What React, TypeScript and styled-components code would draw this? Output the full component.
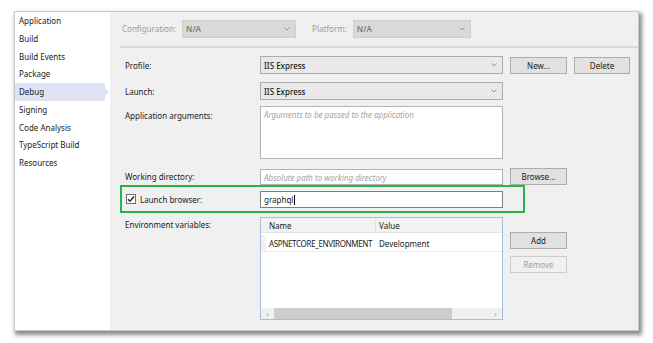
import styled, { createGlobalStyle } from 'styled-components'

const Global = createGlobalStyle`
  html, body {
    margin: 0;
    padding: 0;
    background: #ffffff;
  }
  body {
    font-family: 'Noto Sans', 'Open Sans', sans-serif;
    font-size: 8px;
    color: #1a1a1a;
  }
`

const Page = styled.div`
  width: 653px;
  height: 343px;
  padding: 12px 0 0 15px;
  box-sizing: border-box;
`

const Window = styled.div`
  width: 623px;
  height: 318px;
  display: flex;
  background: #f0f0f0;
  box-shadow: 0 0 0 1px #c8c8c8, 2px 3px 4px 2px rgba(0, 0, 0, 0.45);
`

// Side navigation
const Nav = styled.ul`
  width: 95px;
  margin: 0;
  padding: 0;
  list-style: none;
  background: #ffffff;
`

const NavItem = styled.li<{ $active?: boolean }>`
  position: relative;
  height: 17.75px;
  line-height: 17.75px;
  padding-left: 4px;
  margin-right: 5px;
  background: ${({ $active }) => ($active ? '#dfe3f4' : 'transparent')};

  &::after {
    content: '';
    display: ${({ $active }) => ($active ? 'block' : 'none')};
    position: absolute;
    right: -4px;
    top: 5px;
    border-left: 4px solid #dfe3f4;
    border-top: 4px solid transparent;
    border-bottom: 4px solid transparent;
  }
`

// Main pane
const Main = styled.div`
  flex: 1;
  display: flex;
  flex-direction: column;
  padding-left: 10px;
`

const ConfigBar = styled.div`
  display: flex;
  align-items: center;
  gap: 6px;
  height: 19px;
  margin-top: 7px;
  padding-left: 2px;
  padding-bottom: 8px;
  border-bottom: 2px solid #d8d8d8;
`

const MutedLabel = styled.span<{ $gapBefore?: number }>`
  color: #9d9d9d;
  margin-left: ${({ $gapBefore }) => $gapBefore || 0}px;
`

const Select = styled.div<{ $disabled?: boolean; $w?: number }>`
  display: flex;
  align-items: center;
  justify-content: space-between;
  box-sizing: border-box;
  width: ${({ $w }) => ($w ? `${$w}px` : '100%')};
  height: 18px;
  padding: 0 5px 0 3px;
  border: 1px solid ${({ $disabled }) => ($disabled ? '#cfcfcf' : '#acacac')};
  background: ${({ $disabled }) => ($disabled ? '#d9d9d9' : '#e9e9e9')};
  color: ${({ $disabled }) => ($disabled ? '#7a7a7a' : '#1a1a1a')};
  font-weight: ${({ $disabled }) => ($disabled ? 600 : 500)};
`

const Chevron = () => (
  <svg width="6" height="4" viewBox="0 0 6 4">
    <path d="M0.5 0.5 L3 3 L5.5 0.5" fill="none" stroke="#8a8a8a" strokeWidth="0.9" />
  </svg>
)

const Form = styled.div`
  display: flex;
  flex-direction: column;
  padding-left: 5px;
  margin-top: 8px;
`

const Row = styled.div<{ $top?: number; $align?: string }>`
  display: grid;
  grid-template-columns: 128px 243px 57px 56px;
  column-gap: 7px;
  align-items: ${({ $align }) => $align || 'center'};
  margin-top: ${({ $top }) => $top || 0}px;
`

const Label = styled.span<{ $pad?: number }>`
  padding-top: ${({ $pad }) => $pad || 0}px;
`

const TextBox = styled.div<{ $h?: number; $placeholder?: boolean; $focused?: boolean }>`
  box-sizing: border-box;
  height: ${({ $h }) => $h || 17}px;
  padding: 1px 3px;
  background: #ffffff;
  border: 1px solid ${({ $focused }) => ($focused ? '#7f7f7f' : '#b4b4b4')};
  color: ${({ $placeholder }) => ($placeholder ? '#a3a3a3' : '#1a1a1a')};
  font-style: ${({ $placeholder }) => ($placeholder ? 'italic' : 'normal')};
  line-height: 13px;
  white-space: nowrap;
  overflow: hidden;
`

const Button = styled.button<{ $disabled?: boolean }>`
  box-sizing: border-box;
  height: 17px;
  padding: 0;
  font: inherit;
  background: ${({ $disabled }) => ($disabled ? '#f0f0f0' : '#e1e1e1')};
  border: 1px solid ${({ $disabled }) => ($disabled ? '#cccccc' : '#adadad')};
  color: ${({ $disabled }) => ($disabled ? '#a2a2a2' : '#1a1a1a')};
`

const Highlight = styled.div`
  display: grid;
  grid-template-columns: 127px 243px;
  column-gap: 7px;
  align-items: center;
  box-sizing: border-box;
  width: 405px;
  height: 28px;
  margin: 0 0 0 -5px;
  padding: 0 0 0 4px;
  border: 2px solid #2db14d;
`

const CheckLabel = styled.label`
  display: flex;
  align-items: center;
  gap: 4px;
`

const CheckBox = styled.span`
  display: inline-flex;
  align-items: center;
  justify-content: center;
  width: 10px;
  height: 10px;
  box-sizing: border-box;
  border: 1px solid #707070;
  background: #ffffff;
`

const Caret = styled.span`
  display: inline-block;
  width: 1px;
  height: 10px;
  margin-left: 1px;
  background: #000;
  vertical-align: -2px;
`

// Environment variables grid
const Table = styled.div`
  display: flex;
  flex-direction: column;
  box-sizing: border-box;
  height: 103px;
  background: #ffffff;
  border: 1px solid #a9bdd6;
`

const TRow = styled.div<{ $head?: boolean }>`
  display: grid;
  grid-template-columns: 5px 110px 1fr;
  height: ${({ $head }) => ($head ? 14 : 16)}px;
  margin-bottom: ${({ $head }) => ($head ? 2 : 0)}px;
  background: ${({ $head }) => ($head ? '#f2f2f2' : '#ffffff')};
  border-bottom: 1px solid ${({ $head }) => ($head ? '#e4e4e4' : '#ededed')};
`

const Cell = styled.div<{ $gutter?: boolean; $divider?: boolean; $tight?: boolean }>`
  display: flex;
  align-items: center;
  padding-left: ${({ $gutter }) => ($gutter ? 0 : 3)}px;
  background: ${({ $gutter }) => ($gutter ? '#f2f2f2' : 'transparent')};
  border-right: 1px solid ${({ $divider }) => ($divider ? '#e0e0e0' : 'transparent')};
  letter-spacing: ${({ $tight }) => ($tight ? '-0.35px' : 'normal')};
  white-space: nowrap;
  overflow: hidden;
`

const TBody = styled.div`
  flex: 1;
`

const ScrollBar = styled.div`
  display: grid;
  grid-template-columns: 13px 178px 1fr 13px;
  height: 11px;
  background: #f0f0f0;
  color: #a0a0a0;
  font-size: 8px;
  line-height: 11px;
  text-align: center;
`

const Thumb = styled.div`
  background: #cdcdcd;
`

const SideButtons = styled.div`
  display: flex;
  flex-direction: column;
  gap: 7px;
  margin-top: 15px;
`

const navItems = [
  'Application',
  'Build',
  'Build Events',
  'Package',
  'Debug',
  'Signing',
  'Code Analysis',
  'TypeScript Build',
  'Resources',
]

export default function App() {
  return (
    <>
      <Global />
      <Page>
        <Window>
          <Nav>
            {navItems.map((item) => (
              <NavItem key={item} $active={item === 'Debug'}>
                {item}
              </NavItem>
            ))}
          </Nav>
          <Main>
            <ConfigBar>
              <MutedLabel>Configuration:</MutedLabel>
              <Select $disabled $w={114}>
                N/A
                <Chevron />
              </Select>
              <MutedLabel $gapBefore={10}>Platform:</MutedLabel>
              <Select $disabled $w={118}>
                N/A
                <Chevron />
              </Select>
            </ConfigBar>

            <Form>
              <Row>
                <Label>Profile:</Label>
                <Select>
                  IIS Express
                  <Chevron />
                </Select>
                <Button>New...</Button>
                <Button>Delete</Button>
              </Row>
              <Row $top={8}>
                <Label>Launch:</Label>
                <Select>
                  IIS Express
                  <Chevron />
                </Select>
              </Row>
              <Row $top={6} $align="start">
                <Label $pad={4}>Application arguments:</Label>
                <TextBox $h={53} $placeholder>
                  Arguments to be passed to the application
                </TextBox>
              </Row>
              <Row $top={9}>
                <Label>Working directory:</Label>
                <TextBox $h={16} $placeholder>
                  Absolute path to working directory
                </TextBox>
                <Button>Browse...</Button>
              </Row>
              <Highlight>
                <CheckLabel>
                  <CheckBox>
                    <svg width="8" height="8" viewBox="0 0 8 8">
                      <path d="M1 4.2 L3 6.2 L7 1.5" fill="none" stroke="#222" strokeWidth="1.3" />
                    </svg>
                  </CheckBox>
                  Launch browser:
                </CheckLabel>
                <TextBox $h={17} $focused>
                  graphql
                  <Caret />
                </TextBox>
              </Highlight>
              <Row $top={4} $align="start">
                <Label $pad={2}>Environment variables:</Label>
                <Table>
                  <TRow $head>
                    <Cell $gutter />
                    <Cell $divider>Name</Cell>
                    <Cell>Value</Cell>
                  </TRow>
                  <TRow>
                    <Cell $gutter />
                    <Cell $tight>ASPNETCORE_ENVIRONMENT</Cell>
                    <Cell>Development</Cell>
                  </TRow>
                  <TBody />
                  <ScrollBar>
                    <span>‹</span>
                    <Thumb />
                    <span />
                    <span>›</span>
                  </ScrollBar>
                </Table>
                <SideButtons>
                  <Button>Add</Button>
                  <Button $disabled>Remove</Button>
                </SideButtons>
              </Row>
            </Form>
          </Main>
        </Window>
      </Page>
    </>
  )
}
